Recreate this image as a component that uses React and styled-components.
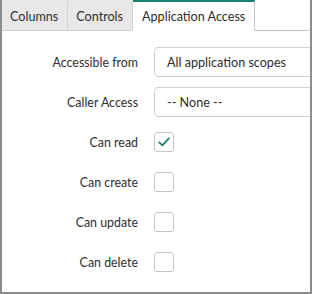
import React from "react";
import styled, { createGlobalStyle } from "styled-components";

const GlobalStyle = createGlobalStyle`
  html, body {
    margin: 0;
    padding: 0;
    background: #ffffff;
  }
  body {
    font-family: Lato, "Liberation Sans", sans-serif;
    color: #2e2e2e;
  }
`;

const tabs = ["Columns", "Controls", "Application Access"];

const fields = [
  { label: "Accessible from", type: "select", value: "All application scopes" },
  { label: "Caller Access", type: "select", value: "-- None --" },
  { label: "Can read", type: "check", checked: true },
  { label: "Can create", type: "check" },
  { label: "Can update", type: "check" },
  { label: "Can delete", type: "check" },
];

export default function App() {
  return (
    <>
      <GlobalStyle />
      <Frame>
        <TabBar>
          {tabs.map((t, i) => (
            <Tab key={t} $active={i === 2}>
              {t}
            </Tab>
          ))}
          <TabFiller />
        </TabBar>
        <Form>
          {fields.map((f) => (
            <Row key={f.label}>
              <Label>{f.label}</Label>
              {f.type === "select" ? (
                <Select>{f.value}</Select>
              ) : (
                <Checkbox>
                  {f.checked && (
                    <svg width="14" height="14" viewBox="0 0 14 14">
                      <path
                        d="M2.2 7.4 L5.4 10.4 L11.8 3.4"
                        fill="none"
                        stroke="#1d7f72"
                        strokeWidth="1.8"
                        strokeLinecap="round"
                        strokeLinejoin="round"
                      />
                    </svg>
                  )}
                </Checkbox>
              )}
            </Row>
          ))}
        </Form>
      </Frame>
    </>
  );
}

const Frame = styled.div`
  width: 312px;
  height: 294px;
  box-sizing: border-box;
  border-left: 2px solid #8c8c8c;
  border-right: 2px solid #8c8c8c;
  border-bottom: 2px solid #8c8c8c;
  overflow: hidden;
  display: flex;
  flex-direction: column;
`;

const TabBar = styled.div`
  display: flex;
  height: 31px;
  flex-shrink: 0;
`;

const Tab = styled.div`
  box-sizing: border-box;
  height: 31px;
  padding: 0 9px 0 ${(p) => (p.$active ? "9px" : "8px")};
  display: flex;
  align-items: center;
  font-size: 12.6px;
  white-space: nowrap;
  color: #2e2e2e;
  background: ${(p) => (p.$active ? "#ffffff" : "#e8e8e8")};
  border-right: 1px solid ${(p) => (p.$active ? "#c4c4c4" : "#d2d2d2")};
  border-top: 2px solid ${(p) => (p.$active ? "#1d7f72" : "#e8e8e8")};
  border-bottom: 1px solid ${(p) => (p.$active ? "transparent" : "#d2d2d2")};
`;

const TabFiller = styled.div`
  flex: 1;
  border-bottom: 1px solid #c4c4c4;
`;

const Form = styled.div`
  padding-top: 11px;
  display: flex;
  flex-direction: column;
`;

const Row = styled.div`
  display: grid;
  grid-template-columns: 136px auto;
  column-gap: 16px;
  align-items: center;
  height: 40px;
`;

const Label = styled.div`
  text-align: right;
  font-size: 12.4px;
  color: #2e2e2e;
  white-space: nowrap;
`;

const Select = styled.div`
  box-sizing: border-box;
  width: 190px;
  height: 30px;
  border: 1px solid #cfcfcf;
  border-radius: 4px;
  padding-left: 12px;
  display: flex;
  align-items: center;
  font-size: 12.6px;
  color: #2e2e2e;
  white-space: nowrap;
`;

const Checkbox = styled.div`
  box-sizing: border-box;
  width: 20px;
  height: 20px;
  border: 1px solid #c6c6c6;
  border-radius: 3px;
  display: flex;
  align-items: center;
  justify-content: center;
`;
